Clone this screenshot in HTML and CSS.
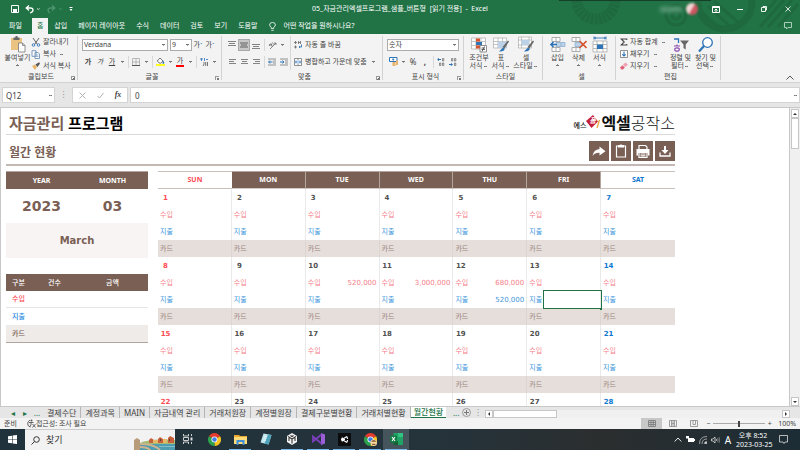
FILE: index.html
```html
<!DOCTYPE html>
<html lang="ko">
<head>
<meta charset="UTF-8" />
<meta name="viewport" content="width=device-width, initial-scale=1" />
<title>05_자금관리엑셀프로그램_샘플_버튼형 - Excel</title>
<link rel="stylesheet" href="styles.css">
</head>
<body>

<header class="top">
  <svg class="pattern" viewBox="0 0 250 33" aria-hidden="true">
    <g fill="none" stroke="#1f693f">
      <circle cx="46" cy="0" r="19" stroke-width="11" stroke-dasharray="3 1"/>
      <circle cx="126" cy="15" r="10" stroke-width="3"/>
      <circle cx="126" cy="15" r="4" stroke-width="3"/>
      <circle cx="175" cy="2" r="27" stroke-width="7"/>
      <path stroke-width="3" d="M152 12l22 20M158 6l26 24M164 1l24 21M210 27l24-27M218 27l24-27M214 14l12-14M228 27l20-23"/>
    </g>
    <path fill="#153f29" d="M9 0h152v1H9z"/>
  </svg>
  <div class="titlebar">
    <div class="quick">
      <button aria-label="저장"><svg width="8" height="8" viewBox="0 0 8 8"><path fill="none" stroke="#fff" d="M.5.5h7v7h-7zM2 4.500h4"/><path fill="#fff" d="M2 5h4v3H2z"/></svg></button>
      <button aria-label="실행 취소"><svg width="16" height="9" viewBox="0 0 16 9"><path fill="none" stroke="#fff" stroke-width="1.300" d="M1 3h4.500q2.500 0 2.500 2T5 8M4 .5L1.200 3 4 5.500"/><path fill="none" stroke="#cfe3d7" d="M12 3.500l1.300 1 1.300-1"/></svg></button>
      <button aria-label="다시 실행"><svg width="16" height="9" viewBox="0 0 16 9"><path fill="none" stroke="#4f9570" stroke-width="1.300" d="M8 3H4Q1 3 1 5t2 3M5 .5L7.800 3 5 5.500"/><path fill="none" stroke="#4f9570" d="M12 3.500l1.300 1 1.300-1"/></svg></button>
      <button aria-label="빠른 실행 도구 모음"><svg width="4" height="6" viewBox="0 0 4 6"><path fill="#fff" d="M.5 1h3v1h-3zM.5 3h3L2 5z"/></svg></button>
    </div>
    <h1 class="doc-title">05_자금관리엑셀프로그램_샘플_버튼형&nbsp; [읽기 전용]&nbsp; -&nbsp; Excel</h1>
    <div class="window-tools">
      <span class="user"></span>
      <span class="avatar"></span>
      <button aria-label="리본 메뉴 표시 옵션"><svg width="8" height="7" viewBox="0 0 8 7"><path fill="none" stroke="#fff" d="M.5.5h7v6h-7zM0 1.500h8M4 6V3M2.500 4.500L4 3l1.500 1.500"/></svg></button>
      <button aria-label="최소화"><svg width="6" height="6" viewBox="0 0 6 6"><path stroke="#fff" d="M0 3.500h6"/></svg></button>
      <button aria-label="이전 크기로"><svg width="6" height="6" viewBox="0 0 6 6"><path fill="none" stroke="#fff" stroke-width=".9" d="M.5 1.500h4v4h-4zM2 1.500v-1h3.500V4h-1"/></svg></button>
      <button aria-label="닫기"><svg width="6" height="6" viewBox="0 0 6 6"><path stroke="#fff" stroke-width=".8" d="M.5.5l5 5M5.500.5l-5 5"/></svg></button>
    </div>
  </div>
  <nav class="tabs">
    <button class="file">파일</button>
    <button class="active">홈</button>
    <button>삽입</button>
    <button>페이지 레이아웃</button>
    <button>수식</button>
    <button>데이터</button>
    <button>검토</button>
    <button>보기</button>
    <button>도움말</button>
    <button class="ask"><svg width="7" height="9" viewBox="0 0 7 9"><path fill="none" stroke="#fff" stroke-width=".8" d="M2.300 6.500V5.300Q.6 4.400.6 3a2.900 2.600 0 015.800 0q0 1.400-1.700 2.300v1.200zM2.300 8.300h2.400"/></svg>어떤 작업을 원하시나요?</button>
    <button class="comment" aria-label="메모"><svg width="8" height="8" viewBox="0 0 8 8"><path fill="none" stroke="#b7d6c4" stroke-width=".9" d="M.5.5h7v5H4L2.500 7V5.500h-2z"/></svg></button>
  </nav>
</header>

<section class="ribbon">
  <div class="group clipboard">
    <div class="group-body">
      <button class="big"><svg width="16" height="17" viewBox="0 0 16 17"><path fill="#eac282" d="M1 2h11v12H1z"/><path fill="#666" d="M3.500 1.500h2V0h2v1.500h2V4h-6z"/><path fill="#fff" stroke="#777" stroke-width=".8" d="M8.500 7h4l2.500 2.500V16H8.500zM12.500 7v2.500H15"/></svg>붙여넣기<i class="caret"></i></button>
      <div class="stack">
        <button class="mini"><svg width="10" height="9" viewBox="0 0 10 9"><path stroke="#555" stroke-width=".9" d="M2 0l4.500 6.500M8 0L3.500 6.500"/><circle cx="2.500" cy="7" r="1.300" fill="none" stroke="#3f7fbf"/><circle cx="7.500" cy="7" r="1.300" fill="none" stroke="#3f7fbf"/></svg>잘라내기</button>
        <button class="mini"><svg width="10" height="9" viewBox="0 0 10 9"><path fill="#fff" stroke="#5f87ae" stroke-width=".8" d="M1 .7h4v5.600H1zM4 2.500h3l1.500 1.600V8.500H4z"/><path stroke="#5f87ae" stroke-width=".6" d="M5 5h2.500M5 6.500h2.500"/></svg>복사<i class="caret"></i></button>
        <button class="mini"><svg width="10" height="9" viewBox="0 0 10 9"><path fill="#e8b36a" d="M1 4l3-1.500L6 5 4 8z"/><path fill="#555" d="M4.500 2.500L8 .3 9 1.500 6.500 5z"/></svg>서식 복사</button>
      </div>
    </div>
    <div class="group-name">클립보드<i class="launcher"></i></div>
  </div>

  <div class="group font">
    <div class="group-body rows">
      <div class="tools">
        <label class="combo family"><select aria-label="글꼴"><option>Verdana</option></select><i class="caret"></i></label>
        <label class="combo size"><select aria-label="글꼴 크기"><option>9</option></select><i class="caret"></i></label>
        <button class="ib">가<sup>ˆ</sup></button>
        <button class="ib">가<sup>ˇ</sup></button>
      </div>
      <div class="tools">
        <button class="ib"><b>가</b></button>
        <button class="ib"><em>가</em></button>
        <button class="ib"><u>가</u></button>
        <i class="caret"></i><i class="sep"></i>
        <button class="ib" aria-label="테두리"><svg width="8" height="8" viewBox="0 0 8 8"><path fill="none" stroke="#aaa" stroke-width=".8" d="M.5.5h7v7h-7zM4 0v8M0 4h8"/><path stroke="#555" d="M0 7.500h8"/></svg></button>
        <i class="caret"></i><i class="sep"></i>
        <button class="ib" aria-label="채우기 색"><svg width="9" height="9" viewBox="0 0 9 9"><path fill="#ffff1a" d="M0 7h9v2H0z"/><path fill="#fff" stroke="#555" stroke-width=".8" d="M1.200 4L4 1l3 3-2.800 2.500z"/><path fill="#2f74b5" d="M7 3.500q2 2 1 3t-1.500-.5z"/></svg></button>
        <i class="caret"></i>
        <button class="ib font-color">가</button>
        <i class="caret"></i><i class="sep"></i>
        <button class="ib" aria-label="윗주"><svg width="8" height="8" viewBox="0 0 8 8"><path fill="none" stroke="#3f7fbf" stroke-width=".9" d="M0 1h3M1.500 0v3M4.500 0v3M6 1.500h2"/><path fill="none" stroke="#666" stroke-width=".9" d="M4 4v1.500Q4 7 3 8M5.700 4v4M7.500 4v4"/></svg></button>
        <i class="caret"></i>
      </div>
    </div>
    <div class="group-name">글꼴<i class="launcher"></i></div>
  </div>

  <div class="group align">
    <div class="group-body">
      <div class="rows align-left">
        <div class="tools">
          <button class="ib" aria-label="위쪽 맞춤"><svg width="8" height="8" viewBox="0 0 8 8"><path stroke="#777" stroke-width=".9" d="M0 .5h8M1 2.500h6M0 4.500h8"/></svg></button>
          <button class="ib pressed" aria-label="가운데 맞춤"><svg width="8" height="8" viewBox="0 0 8 8"><path stroke="#555" stroke-width=".9" d="M0 2h8M1 4h6M0 6h8"/></svg></button>
          <button class="ib" aria-label="아래쪽 맞춤"><svg width="8" height="8" viewBox="0 0 8 8"><path stroke="#777" stroke-width=".9" d="M0 3.500h8M1 5.500h6M0 7.500h8"/></svg></button>
          <i class="sep"></i>
          <button class="ib" aria-label="방향"><svg width="9" height="8" viewBox="0 0 9 8"><path fill="none" stroke="#777" stroke-width=".9" d="M1 5l2-2.500L4.500 6M1 3.500l3 1M2 8l6-6M6 2h2v2M4.500 1.500l1 2"/></svg></button>
          <i class="caret"></i>
        </div>
        <div class="tools">
          <button class="ib" aria-label="왼쪽 맞춤"><svg width="7" height="8" viewBox="0 0 7 8"><path stroke="#777" stroke-width=".9" d="M0 1.500h7M0 3.500h5M0 5.500h7"/></svg></button>
          <button class="ib" aria-label="가운데"><svg width="7" height="8" viewBox="0 0 7 8"><path stroke="#777" stroke-width=".9" d="M0 1.500h7M1 3.500h5M0 5.500h7"/></svg></button>
          <button class="ib" aria-label="오른쪽 맞춤"><svg width="7" height="8" viewBox="0 0 7 8"><path stroke="#777" stroke-width=".9" d="M0 1.500h7M2 3.500h5M0 5.500h7"/></svg></button>
          <i class="sep"></i>
          <button class="ib" aria-label="내어쓰기"><svg width="8" height="8" viewBox="0 0 8 8"><path stroke="#777" stroke-width=".8" d="M0 1h8M5 3h3M5 5h3M0 7h8"/><path fill="none" stroke="#2f74b5" d="M4.500 4h-4M2 2.500L.7 4 2 5.500"/></svg></button>
          <button class="ib" aria-label="들여쓰기"><svg width="8" height="8" viewBox="0 0 8 8"><path stroke="#777" stroke-width=".8" d="M0 1h8M5 3h3M5 5h3M0 7h8"/><path fill="none" stroke="#2f74b5" d="M0 4h4M2.500 2.500L4 4 2.500 5.500"/></svg></button>
        </div>
      </div>
      <div class="rows">
        <button class="wide"><svg width="8" height="8" viewBox="0 0 8 8"><path fill="none" stroke="#666" stroke-width=".8" d="M0 1.500h3M1.500 0v3M0 6h3M1.500 4.500v3M4.500 0v3M6.500 0v3M4.500 1.500h2"/><path fill="none" stroke="#2f74b5" stroke-width=".9" d="M7.500 3.500V6H5M6 5L5 6l1 1"/></svg>자동 줄 바꿈</button>
        <button class="wide"><svg width="8" height="8" viewBox="0 0 8 8"><path fill="#fff" stroke="#777" stroke-width=".8" d="M.5.5h7v7h-7zM4 .5v2M4 5.500v2"/><path fill="#b8d1ea" d="M1 2.500h6v3H1z"/><path fill="none" stroke="#2f74b5" stroke-width=".8" d="M1 4h2M7 4H5"/></svg>병합하고 가운데 맞춤<i class="caret"></i></button>
      </div>
    </div>
    <div class="group-name">맞춤<i class="launcher"></i></div>
  </div>

  <div class="group number">
    <div class="group-body rows">
      <div class="tools">
        <label class="combo format"><select aria-label="표시 형식"><option>숫자</option></select><i class="caret"></i></label>
      </div>
      <div class="tools">
        <button class="ib" aria-label="회계 표시 형식"><svg width="9" height="9" viewBox="0 0 9 9"><path fill="#fff" stroke="#2f74b5" d="M.5.5h7.500v4H.5z"/><circle cx="4.200" cy="2.500" r="1" fill="#2f74b5"/><path fill="#e8b36a" d="M3.500 5h3v4h-3zM7 3.500h2V8H7z"/></svg></button>
        <i class="caret"></i>
        <button class="ib percent">%</button>
        <button class="ib percent"><b>,</b></button>
        <i class="sep"></i>
        <button class="ib" aria-label="자릿수 늘림"><svg width="8" height="8" viewBox="0 0 8 8"><path fill="none" stroke="#2f74b5" d="M4 1.500H.7M2 .3L.7 1.500 2 2.800"/><path fill="none" stroke="#666" stroke-width=".7" d="M5.500.5h1.300v2.500H5.500zM2.500 5h1.300v2.500H2.500zM5.500 5h1.300v2.500H5.500z"/></svg></button>
        <button class="ib" aria-label="자릿수 줄임"><svg width="8" height="8" viewBox="0 0 8 8"><path fill="none" stroke="#2f74b5" d="M0 6.500h3.300M2 5.300l1.300 1.200L2 7.800"/><path fill="none" stroke="#666" stroke-width=".7" d="M2.500.5h1.300v2.500H2.500zM5.500.5h1.300v2.500H5.500zM5.500 5h1.300v2.500H5.500z"/></svg></button>
      </div>
    </div>
    <div class="group-name">표시 형식<i class="launcher"></i></div>
  </div>

  <div class="group styles">
    <div class="group-body">
      <button class="big"><svg width="16" height="16" viewBox="0 0 16 16"><path fill="#fff" stroke="#aaa" stroke-width=".7" d="M.5 1.500h14v11H.5zM.5 5h14M.5 9h14M5 1.500v11M10 1.500v11"/><path fill="#d9532c" d="M5 2h4v3H5zM5 9h4v3H5z"/><path fill="#2f74b5" d="M5 5.500h6v3H5z"/><path fill="#fff" stroke="#777" stroke-width=".8" d="M9 9h6.500v6.500H9z"/><path stroke="#444" stroke-width=".8" d="M10.500 11.500h3.500M10.500 13h3.500M13.500 10l-2.500 5"/></svg>조건부<span>서식<i class="caret"></i></span></button>
      <button class="big"><svg width="16" height="16" viewBox="0 0 16 16"><path fill="#fff" stroke="#aaa" stroke-width=".7" d="M.5 1.500h13v10H.5zM.5 5h13M.5 8h13M5 1.500v10M9.500 1.500v10"/><path fill="#bcd2e8" d="M5 5h8.500v6.500H5z"/><path fill="#666" d="M15 4l1 1-4.500 7-2-1.500z"/><path fill="#2f74b5" d="M10 11l2 1.500q-1.500 3-6 2.500z"/></svg>표<span>서식<i class="caret"></i></span></button>
      <button class="big cell-style"><svg width="16" height="16" viewBox="0 0 16 16"><path fill="#fff" stroke="#aaa" stroke-width=".7" d="M.5.5h13v11H.5zM.5 3.500h13M.5 8.500h13M3.500.5v11M11 .5v11"/><path fill="#bcd2e8" d="M3.500 3.500H11v5H3.500z"/><path fill="#666" d="M15 4l1 1-4.500 7-2-1.500z"/><path fill="#2f74b5" d="M10 11l2 1.500q-1.500 3-6 2.500z"/></svg>셀<span>스타일<i class="caret"></i></span></button>
    </div>
    <div class="group-name">스타일</div>
  </div>

  <div class="group cells">
    <div class="group-body">
      <button class="big"><svg width="16" height="16" viewBox="0 0 16 16"><path fill="#fff" stroke="#999" stroke-width=".8" d="M2 1h8v4H2zM6 1v4M2 11h8v4H2zM6 11v4"/><path fill="#bcd2e8" stroke="#8fb0d0" stroke-width=".8" d="M6 6h9v4H6zM11 6v4"/><path fill="none" stroke="#2f74b5" stroke-width="1.600" d="M7 8H1M3.500 5.500L1 8l2.500 2.500"/></svg>삽입<i class="caret"></i></button>
      <button class="big"><svg width="16" height="16" viewBox="0 0 16 16"><path fill="#fff" stroke="#999" stroke-width=".8" d="M1 1h8v4H1zM5 1v4M1 11h8v4H1zM5 11v4"/><path fill="#bcd2e8" stroke="#8fb0d0" stroke-width=".8" d="M4 6h7v4H4z"/><path stroke="#d9532c" stroke-width="1.600" d="M8.500 4.500l7 7M15.500 4.500l-7 7"/></svg>삭제<i class="caret"></i></button>
      <button class="big"><svg width="16" height="16" viewBox="0 0 16 16"><path fill="#fff" stroke="#aaa" stroke-width=".8" d="M1 4.500h14v11H1zM1 8h14M1 12h14M5 4.500v11M11 4.500v11"/><path fill="#2f74b5" d="M5 8h6v4.500H5z"/><path fill="none" stroke="#2f74b5" stroke-width=".9" d="M2 0v3M14 0v3M2 1.500h12M4 .5l-1.500 1L4 2.500M12 .5l1.500 1-1.500 1"/></svg>서식<i class="caret"></i></button>
    </div>
    <div class="group-name">셀</div>
  </div>

  <div class="group editing">
    <div class="group-body">
      <div class="stack">
        <button class="mini"><svg width="8" height="8" viewBox="0 0 8 8"><path fill="none" stroke="#444" stroke-width="1.100" d="M6.800 2V1H1.200l3 3-3 3h5.600V6"/></svg>자동 합계<i class="caret"></i></button>
        <button class="mini"><svg width="8" height="8" viewBox="0 0 8 8"><path fill="#fff" stroke="#777" stroke-width=".8" d="M.5.5h7v7h-7z"/><path fill="none" stroke="#2f74b5" stroke-width="1.100" d="M4 1.500V6M2.300 4.300L4 6l1.700-1.700"/></svg>채우기<i class="caret"></i></button>
        <button class="mini"><svg width="8" height="8" viewBox="0 0 8 8"><path fill="#e0607a" d="M0 5.500l2.500-2.300 2.300 2.300L3 7.500H1.300z"/><path fill="#f0a0b0" d="M3 2.800L5.500.5 8 2.700 5.200 5z"/></svg>지우기<i class="caret"></i></button>
      </div>
      <button class="big"><svg width="16" height="16" viewBox="0 0 16 16"><path fill="none" stroke="#2f74b5" stroke-width="1.300" d="M1 2.500h4.500v4"/><path fill="none" stroke="#8e4db0" stroke-width="1.200" d="M1 9.500h6M4 8v2M4 13m-2.300 0a2.300 1.700 0 104.600 0 2.300 1.700 0 10-4.600 0"/><path fill="#666" d="M7 4h9l-3.300 4v5l-2.200-1.500V8z"/></svg>정렬 및<span>필터<i class="caret"></i></span></button>
      <button class="big"><svg width="16" height="16" viewBox="0 0 16 16"><circle cx="9.500" cy="6" r="4.800" fill="#fff" stroke="#2f74b5" stroke-width="1.300"/><path stroke="#2f74b5" stroke-width="2.200" d="M6 9.500L1 15"/></svg>찾기 및<span>선택<i class="caret"></i></span></button>
    </div>
    <div class="group-name">편집</div>
  </div>
  <button class="collapse" aria-label="리본 메뉴 축소"><svg width="8" height="5" viewBox="0 0 8 5"><path fill="none" stroke="#555" d="M.5 4.500L4 1l3.500 3.500"/></svg></button>
</section>

<section class="formula">
  <label class="namebox"><input type="text" value="Q12" aria-label="이름 상자"><i class="caret"></i></label>
  <span class="grip">⁝</span>
  <div class="fx">
    <button aria-label="취소"><svg width="7" height="7" viewBox="0 0 7 7"><path stroke="#aaa" stroke-width=".9" d="M.5.5l6 6M6.500.5l-6 6"/></svg></button>
    <button aria-label="입력"><svg width="7" height="7" viewBox="0 0 7 7"><path fill="none" stroke="#aaa" stroke-width=".9" d="M.5 4L2.500 6l4-5"/></svg></button>
    <button class="fn">fx</button>
  </div>
  <label class="formula-input"><input type="text" value="0" aria-label="수식 입력줄"><i class="caret"></i></label>
</section>

<div class="workspace">
  <main class="sheet">
    <div class="page">
      <div class="title-row">
        <h2><span>자금관리</span> 프로그램</h2>
        <div class="brand">
          <span class="yes">예스</span><span class="stamp"><svg width="14" height="16" viewBox="0 0 14 16"><path fill="#c4203a" d="M0 6L7 0l5 6.500L5.500 13z"/><path stroke="#e8a53a" stroke-width="1.300" d="M11 13l2.500-8"/></svg><i>폼</i></span><b>엑셀</b><span class="thin">공작소</span>
        </div>
      </div>
      <div class="section-row">
        <h3>월간 현황</h3>
        <div class="actions">
          <button aria-label="이동"><svg width="20" height="20" viewBox="0 0 20 20"><path fill="#fff" d="M10.500 5.500l6 4.800-6 4.200v-2.700Q6 11.500 3.500 15 4.500 8.500 10.500 8z"/></svg></button>
          <button aria-label="붙여넣기"><svg width="20" height="20" viewBox="0 0 20 20"><path fill="none" stroke="#fff" stroke-width="1.200" d="M5.500 5h9v11h-9z"/><path fill="#fff" d="M7 4h2q1-1.500 2 0h2v2.500H7z"/></svg></button>
          <button aria-label="인쇄"><svg width="20" height="20" viewBox="0 0 20 20"><path fill="#fff" d="M3.500 8h13v6.500H15V12H5v2.500H3.500z"/><path fill="none" stroke="#fff" stroke-width="1.200" d="M6 8V4.500h6.500L14 6v2M6 12v4.500h8V12M7.500 13h5M7.500 14.800h5"/></svg></button>
          <button aria-label="다운로드"><svg width="20" height="20" viewBox="0 0 20 20"><path fill="#fff" d="M9 5h2v4h2.500L10 13 6.500 9H9z"/><path fill="none" stroke="#fff" stroke-width="1.300" d="M5 11.500V15h10v-3.500"/></svg></button>
        </div>
      </div>
      <div class="columns">
        <aside>
          <div class="ym-head"><span>YEAR</span><span>MONTH</span></div>
          <div class="ym"><span>2023</span><span>03</span></div>
          <div class="month-name">March</div>
          <table class="summary">
            <thead><tr><th>구분</th><th>건수</th><th>금액</th></tr></thead>
            <tbody>
              <tr class="income"><td>수입</td><td></td><td></td></tr>
              <tr class="expense"><td>지출</td><td></td><td></td></tr>
              <tr class="card"><td>카드</td><td></td><td></td></tr>
            </tbody>
          </table>
        </aside>
        <table class="calendar">
          <thead>
            <tr>
              <th colspan="2" class="sun">SUN</th>
              <th colspan="2">MON</th>
              <th colspan="2">TUE</th>
              <th colspan="2">WED</th>
              <th colspan="2">THU</th>
              <th colspan="2">FRI</th>
              <th colspan="2" class="sat">SAT</th>
            </tr>
          </thead>
          <tbody id="days"></tbody>
        </table>
      </div>
    </div>
  </main>
  <div class="vscroll">
    <button aria-label="위로"><i class="up"></i></button>
    <div class="thumb"></div>
    <button class="last" aria-label="아래로"><i class="down"></i></button>
  </div>
</div>

<nav class="sheet-tabs">
  <button class="arrow">◂</button>
  <button class="arrow">▸</button>
  <button class="more">...</button>
  <button class="tab">결제수단</button>
  <button class="tab">계정과목</button>
  <button class="tab">MAIN</button>
  <button class="tab">자금내역 관리</button>
  <button class="tab">거래처원장</button>
  <button class="tab">계정별원장</button>
  <button class="tab">결제구분별현황</button>
  <button class="tab">거래처별현황</button>
  <button class="tab active">월간현황</button>
  <button class="more">...</button>
  <button class="add" aria-label="새 시트"><svg width="9" height="9" viewBox="0 0 9 9"><circle cx="4.500" cy="4.500" r="4" fill="none" stroke="#888" stroke-width=".8"/><path stroke="#777" d="M4.500 2v5M2 4.500h5"/></svg></button>
  <span class="grip">⁝</span>
  <div class="hscroll">
    <button aria-label="왼쪽"><i class="left"></i></button>
    <div class="thumb"></div>
    <button class="last" aria-label="오른쪽"><i class="right"></i></button>
  </div>
</nav>

<div class="status">
  <span>준비</span>
  <span class="access"><svg width="9" height="9" viewBox="0 0 9 9"><circle cx="4.500" cy="1.500" r="1" fill="#555"/><path fill="none" stroke="#555" stroke-width=".9" d="M3 1Q.5 2.500.7 5T3.500 8M2 3.500h4.500M4 3.500V6L2.500 8M5.500 5l3 3.500M8.500 5l-3 3.500"/></svg>접근성: 조사 필요</span>
  <div class="views">
    <button class="on" aria-label="기본"><svg width="8" height="7" viewBox="0 0 8 7"><path fill="none" stroke="#777" stroke-width=".8" d="M.5.5h7v6h-7zM.5 2.500h7M.5 4.500h7M3 .5v6M5.300.5v6"/></svg></button>
    <button aria-label="페이지 레이아웃"><svg width="8" height="7" viewBox="0 0 8 7"><path fill="none" stroke="#888" stroke-width=".8" d="M.5.5h7v6h-7zM2.500.5v6M5.500.5v6M3 2h2M3 3.500h2M3 5h2"/></svg></button>
    <button aria-label="페이지 나누기 미리 보기"><svg width="8" height="7" viewBox="0 0 8 7"><path fill="none" stroke="#888" stroke-width=".8" d="M.5.5h7v6h-7zM3 .5v4h2.500v-4"/></svg></button>
  </div>
  <div class="zoom">
    <button aria-label="축소">−</button>
    <input type="range" min="10" max="190" value="100" aria-label="확대/축소">
    <button aria-label="확대">+</button>
    <span>100%</span>
  </div>
</div>

<footer class="taskbar">
  <button class="start" aria-label="시작"><svg width="9" height="9" viewBox="0 0 9 9"><path fill="#fff" d="M0 1.200L4 .7v3.500H0zM4.600.6L9 0v4.200H4.600zM0 4.800h4v3.500l-4-.5zM4.600 4.800H9V9l-4.400-.6z"/></svg></button>
  <label class="search">
    <svg width="9" height="9" viewBox="0 0 9 9"><circle cx="5.500" cy="3.500" r="2.800" fill="none" stroke="#333"/><path stroke="#333" d="M3.500 5.500L.5 8.500"/></svg>
    <input type="search" placeholder="찾기" aria-label="찾기">
    <svg class="scene" width="41" height="14" viewBox="0 0 41 14">
      <path fill="#a8bd73" d="M6 7q10-5 35-3v5H6z"/>
      <path fill="#4f9bb0" d="M5 8h36v6H5z"/>
      <path fill="#c65f3c" d="M15 4l2-2 3 2v3h-5zM24 3l2-2 3 2v4h-5zM34 2l2-2 4 2v5h-6z"/>
      <path fill="#e6b765" d="M19 4h5v3h-5zM29 3h4v4h-4z"/>
      <path fill="#5c3f35" d="M35 3h1v2h-1zM26 3h1v2h-1z"/>
      <path fill="#b89b7a" d="M0 4l3-2 3 2v10H0z"/>
      <path fill="none" stroke="#cdb48f" stroke-width="2" d="M6 8q14 0 20 6M6 11q7 0 10 3"/>
      <path fill="#7fc0c8" d="M25 10h16v1H25z"/>
    </svg>
  </label>
  <div class="apps">
    <button aria-label="작업 보기"><svg width="10" height="10" viewBox="0 0 10 10"><path fill="none" stroke="#ddd" stroke-width=".9" d="M.5 0v2h5V0M.5 3.500h5v3h-5zM.5 10V8h5v2M8.500 0v2M8.500 8v2"/><path fill="#ddd" d="M7.500 3.500h2v3h-2z"/></svg></button>
    <button aria-label="Chrome"><svg width="13" height="13" viewBox="0 0 12 12"><path fill="#e33b2e" d="M6 6L.8 3A6 6 0 0111.200 3z"/><path fill="#f9c31f" d="M6 6l5.200-3A6 6 0 016 12z"/><path fill="#2da14c" d="M6 6v6A6 6 0 01.8 3z"/><circle cx="6" cy="6" r="2.800" fill="#fff"/><circle cx="6" cy="6" r="2.100" fill="#3f7de8"/></svg></button>
    <button class="open" aria-label="탐색기"><svg width="13" height="11" viewBox="0 0 13 11"><path fill="#e9a92e" d="M0 1h5l1 1h7v8H0z"/><path fill="#ffdb7a" d="M0 3h13v7H0z"/><path fill="#3f8fd6" d="M2.500 6h8v5h-2V8h-4v3h-2z"/></svg></button>
    <button aria-label="메모장"><svg width="12" height="12" viewBox="0 0 12 12"><path fill="#bfe6ee" d="M3.500.5l8 1.500-3 9.500-8-2z"/><path fill="#4da3bb" d="M8 1.500l3.500.5-3 9.500-4-1z"/><path stroke="#fff" stroke-width=".6" d="M4 3l3 .5M3.500 5l3 .5M3 7l3 .5"/></svg></button>
    <button class="open" aria-label="Unity Hub"><svg width="12" height="12" viewBox="0 0 12 12"><path fill="#f4f4f4" d="M6 0l5 3v6l-5 3-5-3V3z"/><path fill="none" stroke="#333" stroke-width="1.100" d="M6 10.500V6L2 3.500M6 6l4-2.500M3 8V5M9 8V5M4.500 2.500L6 3.500l1.500-1"/></svg></button>
    <button class="open" aria-label="Visual Studio"><svg width="13" height="12" viewBox="0 0 13 12"><path fill="#9b5fd6" d="M9 0l4 1.500v9L9 12z"/><path fill="none" stroke="#7c3fc0" stroke-width="1.700" d="M9.500 1.500L1 8.500V3.500l8.500 7"/></svg></button>
    <button class="open" aria-label="Unity"><svg width="13" height="13" viewBox="0 0 13 13"><path fill="#0c0c0c" d="M0 0h13v13H0z"/><path fill="none" stroke="#fff" stroke-width="1.100" d="M9 3.500L4 6.500l5 3M4 6.500h3M9 3.500l.5 2.500M9 9.500L9.500 7M4.500 4.500L3.500 6.500l1 2"/></svg></button>
    <button class="open" aria-label="Chrome 프로필"><svg width="13" height="13" viewBox="0 0 12 12"><path fill="#e33b2e" d="M6 6L.8 3A6 6 0 0111.200 3z"/><path fill="#f9c31f" d="M6 6l5.200-3A6 6 0 016 12z"/><path fill="#2da14c" d="M6 6v6A6 6 0 01.8 3z"/><circle cx="6" cy="6" r="2.800" fill="#fff"/><circle cx="6" cy="6" r="2.100" fill="#3f7de8"/><circle cx="9" cy="9" r="3" fill="#f4d9a0"/><path fill="#8c5a30" d="M6.500 8q2.500-3 5 0zM7.500 10h3v1h-3z"/></svg></button>
    <button class="open current" aria-label="Excel"><svg width="13" height="12" viewBox="0 0 13 12"><path fill="#21a366" d="M3.500 0H13v12H3.500z"/><path fill="#33c481" d="M8 0h5v4H8z"/><path fill="#185c37" d="M3.500 8H8v4H3.500z"/><path fill="#107c41" d="M0 2.500h7v7H0z"/><path stroke="#fff" stroke-width="1.100" d="M2 4l3 4M5 4L2 8"/></svg></button>
  </div>
  <div class="tray">
    <svg width="8" height="5" viewBox="0 0 8 5"><path fill="none" stroke="#fff" stroke-width=".9" d="M.7 4.500L4 1l3.300 3.500"/></svg>
    <svg width="9" height="7" viewBox="0 0 9 7"><path fill="#fff" d="M2 2h6v4H2zM8 3h1v2H8zM0 0h3v2.500H0z"/></svg>
    <svg width="8" height="8" viewBox="0 0 8 8"><path fill="none" stroke="#bbb" stroke-width=".8" d="M.5 8Q.5.500 8 .5M3 8q0-5 5-5M5.200 8Q5.200 5.500 8 5.500"/><circle cx="7" cy="7" r=".9" fill="#fff"/></svg>
    <svg width="9" height="8" viewBox="0 0 9 8"><path fill="none" stroke="#ddd" stroke-width=".8" d="M.5 3v2h1.300L4 7V1L1.800 3zM5.500 3q.7 1 0 2"/><path fill="none" stroke="#888" stroke-width=".8" d="M6.500 2q1.500 2 0 4M8 1q1.500 3 0 6"/></svg>
    <span class="ime">A</span>
    <span class="clock">오후 8:52<br>2023-03-25</span>
    <svg width="9" height="9" viewBox="0 0 9 9"><path fill="none" stroke="#ddd" stroke-width=".8" d="M.5.5h8v6.500H6L5 8.500 4 7H.5z"/></svg>
  </div>
</footer>

<script src="calendar.js"></script>
</body>
</html>
```

FILE: styles.css
```css
* {
  box-sizing: border-box;
}
body {
  margin: 0;
  height: 100vh;
  display: flex;
  flex-direction: column;
  overflow: hidden;
  font-family: "Noto Sans", "Noto Sans CJK KR", sans-serif;
  font-size: 7px;
  line-height: 8px;
  color: #444;
  background: #e6e6e6;
}
button, input, select {
  font: inherit;
  color: inherit;
  background: none;
  border: 0;
  padding: 0;
  margin: 0;
  border-radius: 0;
}
button {
  display: flex;
  align-items: center;
  justify-content: center;
  white-space: nowrap;
}
input, select {
  appearance: none;
  min-width: 0;
  outline: none;
}
h1, h2, h3 {
  margin: 0;
}
svg {
  flex: none;
  display: block;
}

/* title bar and ribbon tabs */
.top {
  position: relative;
  flex: none;
  background: #217346;
  color: #fff;
}
.pattern {
  position: absolute;
  top: 0;
  right: 0;
  width: 250px;
  height: 33px;
}
.titlebar {
  position: relative;
  display: grid;
  grid-template-columns: 1fr auto 1fr;
  align-items: center;
  height: 18px;
}
.quick {
  display: flex;
  align-items: center;
  gap: 6px;
  padding-left: 11px;
}
.doc-title {
  font-size: 7px;
  font-weight: 400;
}
.window-tools {
  display: flex;
  align-items: center;
  justify-content: flex-end;
}
.window-tools button {
  width: 24px;
  height: 16px;
}
.user {
  width: 22px;
  height: 5px;
  margin-right: 4px;
  background: #5d9b79;
  filter: blur(2px);
}
.avatar {
  width: 12px;
  height: 12px;
  margin-right: 6px;
  border-radius: 50%;
  background: linear-gradient(120deg, #f3d5d5 45%, #cc5560 55%);
  filter: blur(1px);
}
.tabs {
  position: relative;
  display: flex;
  gap: 1px;
  height: 16px;
  padding-left: 4px;
}
.tabs button {
  padding: 0 5px;
}
.tabs .file {
  margin-right: 4px;
}
.tabs .active {
  background: #f3f3f3;
  color: #217346;
}
.tabs .ask {
  gap: 7px;
  margin-left: 1px;
}
.tabs .comment {
  margin-left: auto;
  margin-right: 3px;
}

/* ribbon */
.ribbon {
  flex: none;
  display: flex;
  height: 49px;
  background: #f3f3f3;
  border-bottom: 1px solid #d2d2d2;
}
.group {
  position: relative;
  display: flex;
  flex-direction: column;
  flex: none;
  padding: 2px 0 0 4px;
}
.group::after {
  content: "";
  position: absolute;
  top: 2px;
  right: 0;
  bottom: 2px;
  width: 1px;
  background: #d2d2d2;
}
.group-body {
  flex: 1;
  display: flex;
  align-items: flex-start;
}
.group-name {
  position: relative;
  height: 9px;
  text-align: center;
}
.clipboard { width: 78px; }
.font { width: 144px; }
.align { width: 161px; }
.number { width: 81px; }
.styles { width: 79px; }
.cells { width: 73px; }
.editing { width: 105px; }

.rows {
  display: flex;
  flex-direction: column;
  align-items: flex-start;
}
.tools {
  display: flex;
  align-items: center;
  height: 17px;
}
.ib {
  width: 12px;
  height: 12px;
}
.ib sup {
  color: #2f74b5;
  font-size: 6px;
  line-height: 4px;
}
.ib.percent {
  font-size: 8px;
}
.ib.pressed {
  background: #c8c8c8;
  outline: 1px solid #a8a8a8;
  outline-offset: -1px;
}
.font-color {
  height: 10px;
  border-bottom: 2px solid #f00;
  width: 8px;
  margin: 0 2px;
}
.caret {
  flex: none;
  width: 8px;
  height: 4px;
  background: linear-gradient(#777, #777) center / 3px 1px no-repeat;
}
.caret::after {
  content: "";
  display: block;
  width: 1px;
  height: 1px;
  margin: 2px auto 0;
  background: #999;
}
.sep {
  width: 4px;
  height: 12px;
  background: linear-gradient(#d8d8d8, #d8d8d8) center / 1px 100% no-repeat;
}
.combo {
  display: flex;
  align-items: center;
  height: 12px;
  border: 1px solid #ababab;
  background: #fff;
}
.combo select {
  flex: 1;
  padding-left: 1px;
}
.family {
  width: 86px;
  margin-right: 2px;
}
.size {
  width: 22px;
}
.format {
  width: 72px;
}
.align-left {
  width: 65px;
  margin-right: 3px;
  border-right: 1px solid #d8d8d8;
}
.wide {
  height: 17px;
  gap: 3px;
}
.big {
  flex-direction: column;
  justify-content: flex-start;
  min-width: 21px;
}
.big svg {
  height: 17px;
  margin-bottom: 1px;
}
.big span {
  display: flex;
  align-items: center;
}
.big .caret {
  height: 7px;
}
.big span .caret {
  height: 4px;
  width: 6px;
}
.clipboard .big {
  width: 27px;
}
.styles .big {
  width: 22px;
}
.styles .cell-style {
  width: 28px;
}
.editing .big {
  width: 25px;
}
.stack {
  display: flex;
  flex-direction: column;
}
.mini {
  height: 12px;
  gap: 2px;
  justify-content: flex-start;
}
.editing .stack {
  width: 48px;
}
.launcher {
  position: absolute;
  right: 3px;
  top: 3px;
  width: 4px;
  height: 4px;
  border: 1px solid #999;
  border-width: 1px 0 0 1px;
  background: linear-gradient(135deg, transparent 50%, #777 50%);
}
.collapse {
  margin-left: auto;
  align-self: flex-end;
  width: 20px;
  height: 10px;
}

/* formula bar */
.formula {
  flex: none;
  display: flex;
  height: 24px;
  padding: 4px 0;
  font-size: 8px;
}
.namebox, .fx, .formula-input {
  display: flex;
  align-items: center;
  background: #fff;
  border: 1px solid #d4d4d4;
}
.namebox {
  width: 53px;
  margin-left: 2px;
}
.namebox input, .formula-input input {
  flex: 1;
  padding-left: 3px;
}
.grip {
  width: 17px;
  text-align: center;
  line-height: 16px;
  color: #888;
}
.fx {
  width: 56px;
  margin-right: 2px;
}
.fx button {
  flex: 1;
}
.fn {
  font-family: "Liberation Serif", serif;
  font-style: italic;
  font-weight: 700;
}
.formula-input {
  flex: 1;
}
.formula-input input {
  padding-left: 4px;
}

/* worksheet */
.workspace {
  flex: 1;
  min-height: 0;
  display: flex;
  border-top: 1px solid #c8c8c8;
}
.sheet {
  flex: 1;
  overflow: hidden;
  background: #fff;
  border-left: 1px solid #c8c8c8;
  border-right: 1px solid #c8c8c8;
}
.page {
  max-width: 674px;
  padding-left: 5px;
  color: #7a5f55;
}
.title-row, .section-row {
  display: flex;
  align-items: center;
  justify-content: space-between;
}
.title-row {
  height: 27px;
  padding-top: 4px;
  border-bottom: 1px solid #d9d9d9;
}
.title-row h2 {
  padding-left: 3px;
  font-size: 15px;
  line-height: 20px;
  font-weight: 700;
  color: #000;
}
.title-row h2 span {
  color: #7a5f55;
}
.brand {
  display: flex;
  align-items: center;
  font-size: 16px;
  line-height: 20px;
  color: #111;
}
.brand .yes {
  font-size: 7px;
  font-weight: 500;
  padding-top: 6px;
}
.brand .thin {
  font-weight: 300;
}
.brand b {
  font-weight: 700;
}
.stamp {
  position: relative;
  margin-right: 1px;
}
.stamp i {
  position: absolute;
  left: 3px;
  top: 1px;
  font-size: 7px;
  line-height: 10px;
  font-weight: 700;
  color: #fff;
}
.section-row {
  height: 31px;
  border-bottom: 2px solid #c4b8b4;
}
.section-row h3 {
  padding: 7px 0 0 3px;
  font-size: 12px;
  line-height: 16px;
  font-weight: 700;
}
.actions {
  display: flex;
  gap: 2px;
  padding-top: 3px;
}
.actions button {
  width: 20px;
  height: 20px;
  background: #7a5f55;
}
.columns {
  display: flex;
  gap: 10px;
  align-items: flex-start;
  padding-top: 5px;
}
aside {
  width: 142px;
  flex: none;
}
.ym-head, .ym {
  display: grid;
  grid-template-columns: 1fr 1fr;
  justify-items: center;
  align-items: center;
  font-weight: 700;
}
.ym-head {
  height: 18px;
  color: #fff;
  background: #7a5f55;
  border-top: 1px solid #b3a49e;
}
.ym {
  height: 34px;
  font-family: "DejaVu Sans", sans-serif;
  font-size: 14px;
}
.month-name {
  height: 35px;
  background: #f7f4f3;
  font: 700 10px/35px "DejaVu Sans", sans-serif;
  text-align: center;
}
table {
  border-collapse: separate;
  border-spacing: 0;
  table-layout: fixed;
}
th, td {
  padding: 0;
  height: 17px;
}
.summary {
  width: 100%;
  margin-top: 16px;
  text-align: left;
  font-weight: 500;
  border-bottom: 1px solid #b3a49e;
}
.summary th {
  color: #fff;
  background: #7a5f55;
  font-weight: 500;
}
.summary th:first-child {
  width: 42px;
}
.summary th:nth-child(2) {
  width: 44px;
}
.summary th:last-child {
  padding-left: 14px;
}
.summary td:first-child, .summary th:first-child {
  padding-left: 6px;
}
.summary .income {
  color: #ff4b55;
}
.summary .income td {
  border-bottom: 1px solid #e8e6e5;
}
.summary .expense {
  color: #1a86dc;
}
.summary .card td {
  background: #efebe8;
}

.calendar {
  flex: 1;
  width: 0;
}
.calendar th {
  height: 18px;
  background: #7a5f55;
  color: #fff;
  font-weight: 700;
  border-top: 1px solid #b3a49e;
  border-bottom: 1px solid #d3c9c5;
  border-right: 1px solid #b3a49e;
}
.calendar .sun, .calendar .sat {
  background: #fff;
  border-color: #c9bfbb;
  border-right: 0;
}
.calendar th.sun {
  color: #ff4b55;
}
.calendar th.sat {
  color: #0f78cf;
}
.calendar td {
  white-space: nowrap;
}
.calendar .label {
  padding-left: 2px;
}
.calendar .amount {
  padding-right: 2px;
  text-align: right;
  font-family: "DejaVu Sans", sans-serif;
  border-right: 1px solid #eaeaea;
}
.calendar td:last-child {
  border-right: 0;
}
.calendar .date td {
  font: 700 7px/8px "DejaVu Sans", sans-serif;
  color: #505050;
  border-right: 1px solid #eaeaea;
}
.calendar .date td:last-child {
  border-right: 0;
}
.date span {
  display: block;
  width: 15px;
  text-align: center;
}
.calendar .date .sunday {
  color: #ff4b55;
}
.calendar .date .saturday {
  color: #0f78cf;
}
.calendar .income {
  color: #f5808a;
}
.calendar .expense {
  color: #3f97dc;
}
.calendar .card {
  color: #9a857c;
}
.calendar .card td {
  background: #e5dedb;
}
.calendar .card .amount {
  border-color: #ddd5d1;
}
.calendar .selected {
  position: relative;
  outline: 1px solid #217346;
}
.calendar .selected::after {
  content: "";
  position: absolute;
  right: -2px;
  bottom: -2px;
  width: 2px;
  height: 2px;
  background: #217346;
}

/* scroll bars */
.vscroll, .hscroll {
  display: flex;
  background: #f0f0f0;
}
.vscroll {
  flex-direction: column;
  width: 10px;
  padding: 1px 1px 0;
}
.vscroll button, .hscroll button, .thumb {
  background: #fff;
  border: 1px solid #c6c6c6;
}
.vscroll button {
  height: 9px;
}
.vscroll .thumb {
  height: 31px;
}
.vscroll .last {
  margin-top: auto;
}
.up, .down, .left, .right {
  border: 2px solid transparent;
}
.up { border-top: 0; border-bottom-color: #333; }
.down { border-bottom: 0; border-top-color: #333; }
.left { border-left: 0; border-right-color: #333; }
.right { border-right: 0; border-left-color: #333; }
.hscroll {
  flex: 1;
  height: 8px;
  margin: 3px 10px 0 0;
}
.hscroll button {
  width: 8px;
}
.hscroll .thumb {
  width: 64px;
}
.hscroll .last {
  margin-left: auto;
}

/* sheet tabs */
.sheet-tabs {
  flex: none;
  display: flex;
  height: 12px;
  padding-left: 7px;
  border-top: 1px solid #c8c8c8;
  background: #e6e6e6;
  font-size: 8px;
}
.sheet-tabs .arrow {
  width: 12px;
  color: #217346;
}
.more {
  width: 12px;
  color: #217346;
}
.tab {
  height: 11px;
  padding: 0 4px;
  border-right: 1px solid #b5b5b5;
}
.tab.active {
  background: #fff;
  color: #217346;
  font-weight: 500;
  padding: 0 3px;
  border-right: 0;
  border-bottom: 1px solid #217346;
}
.sheet-tabs .active + .more {
  margin-left: 4px;
}
.sheet-tabs .grip {
  width: 14px;
  line-height: 12px;
}

/* status bar */
.status {
  flex: none;
  display: flex;
  align-items: center;
  height: 11px;
  padding: 0 4px;
  background: #f3f3f3;
}
.access {
  display: flex;
  align-items: center;
  margin-left: 10px;
}
.views {
  display: flex;
  height: 100%;
  margin-left: auto;
}
.views button {
  width: 21px;
}
.views .on {
  background: #c8c8c8;
}
.zoom {
  display: flex;
  align-items: center;
}
.zoom button {
  width: 9px;
}
.zoom input {
  width: 52px;
  height: 7px;
  background: linear-gradient(#aaa, #aaa) center / 100% 1px no-repeat;
}
.zoom input::-webkit-slider-thumb {
  appearance: none;
  width: 2px;
  height: 6px;
  background: #444;
}
.zoom span {
  margin-left: 4px;
}

/* windows taskbar */
.taskbar {
  flex: none;
  display: flex;
  height: 21px;
  background: linear-gradient(90deg, #20323b, #25333b 55%, #2b2e2f 75%, #1d2d35);
  color: #fff;
}
.start {
  width: 25px;
}
.search {
  display: flex;
  align-items: center;
  width: 150px;
  padding-left: 6px;
  background: #f2f2f2;
  border-top: 1px solid #ccc;
}
.search input {
  flex: 1;
  padding-left: 6px;
  font-size: 9px;
  line-height: 12px;
}
.search input::placeholder {
  color: #333;
}
.scene {
  align-self: flex-end;
}
.apps {
  display: flex;
}
.apps button {
  width: 26px;
  border-bottom: 1px solid transparent;
}
.apps .open {
  border-image: linear-gradient(90deg, transparent 10%, #76b9ed 10%, #76b9ed 90%, transparent 90%) 1;
}
.apps .current {
  background: #46545b;
}
.tray {
  display: flex;
  align-items: center;
  gap: 4px;
  margin-left: auto;
  padding-right: 12px;
}
.ime {
  width: 8px;
  font-size: 10px;
  text-align: center;
}
.clock {
  width: 34px;
  margin-right: 5px;
  line-height: 9px;
  text-align: center;
  white-space: nowrap;
}
```

FILE: calendar.js
```js
const WEEKS = 4;
const amounts = {
  10: { income: "520,000" },
  11: { income: "3,000,000" },
  12: { income: "680,000", expense: "520,000" },
};
const kinds = [
  ["income", "수입"],
  ["expense", "지출"],
  ["card", "카드"],
];
const selected = { day: 13, kind: "expense" };

let html = "";
for (let week = 0; week < WEEKS; week++) {
  const days = [1, 2, 3, 4, 5, 6, 7].map((d) => d + week * 7);

  html += '<tr class="date">';
  days.forEach((day, i) => {
    const cls = i === 0 ? "sunday" : i === 6 ? "saturday" : "";
    html += `<td colspan="2" class="${cls}"><span>${day}</span></td>`;
  });
  html += "</tr>";

  // the last week only shows its dates
  if (week === WEEKS - 1) break;

  kinds.forEach(([kind, label]) => {
    html += `<tr class="${kind}">`;
    days.forEach((day) => {
      const value = (amounts[day] && amounts[day][kind]) || "";
      const sel = day === selected.day && kind === selected.kind ? " selected" : "";
      html += `<td class="label">${label}</td><td class="amount${sel}">${value}</td>`;
    });
    html += "</tr>";
  });
}
document.getElementById("days").innerHTML = html;

// narrow label column, wide amount column for each weekday
const cols = document.createElement("colgroup");
cols.innerHTML = '<col style="width:3.3%"><col style="width:10.98%">'.repeat(7);
document.querySelector(".calendar").prepend(cols);
```
